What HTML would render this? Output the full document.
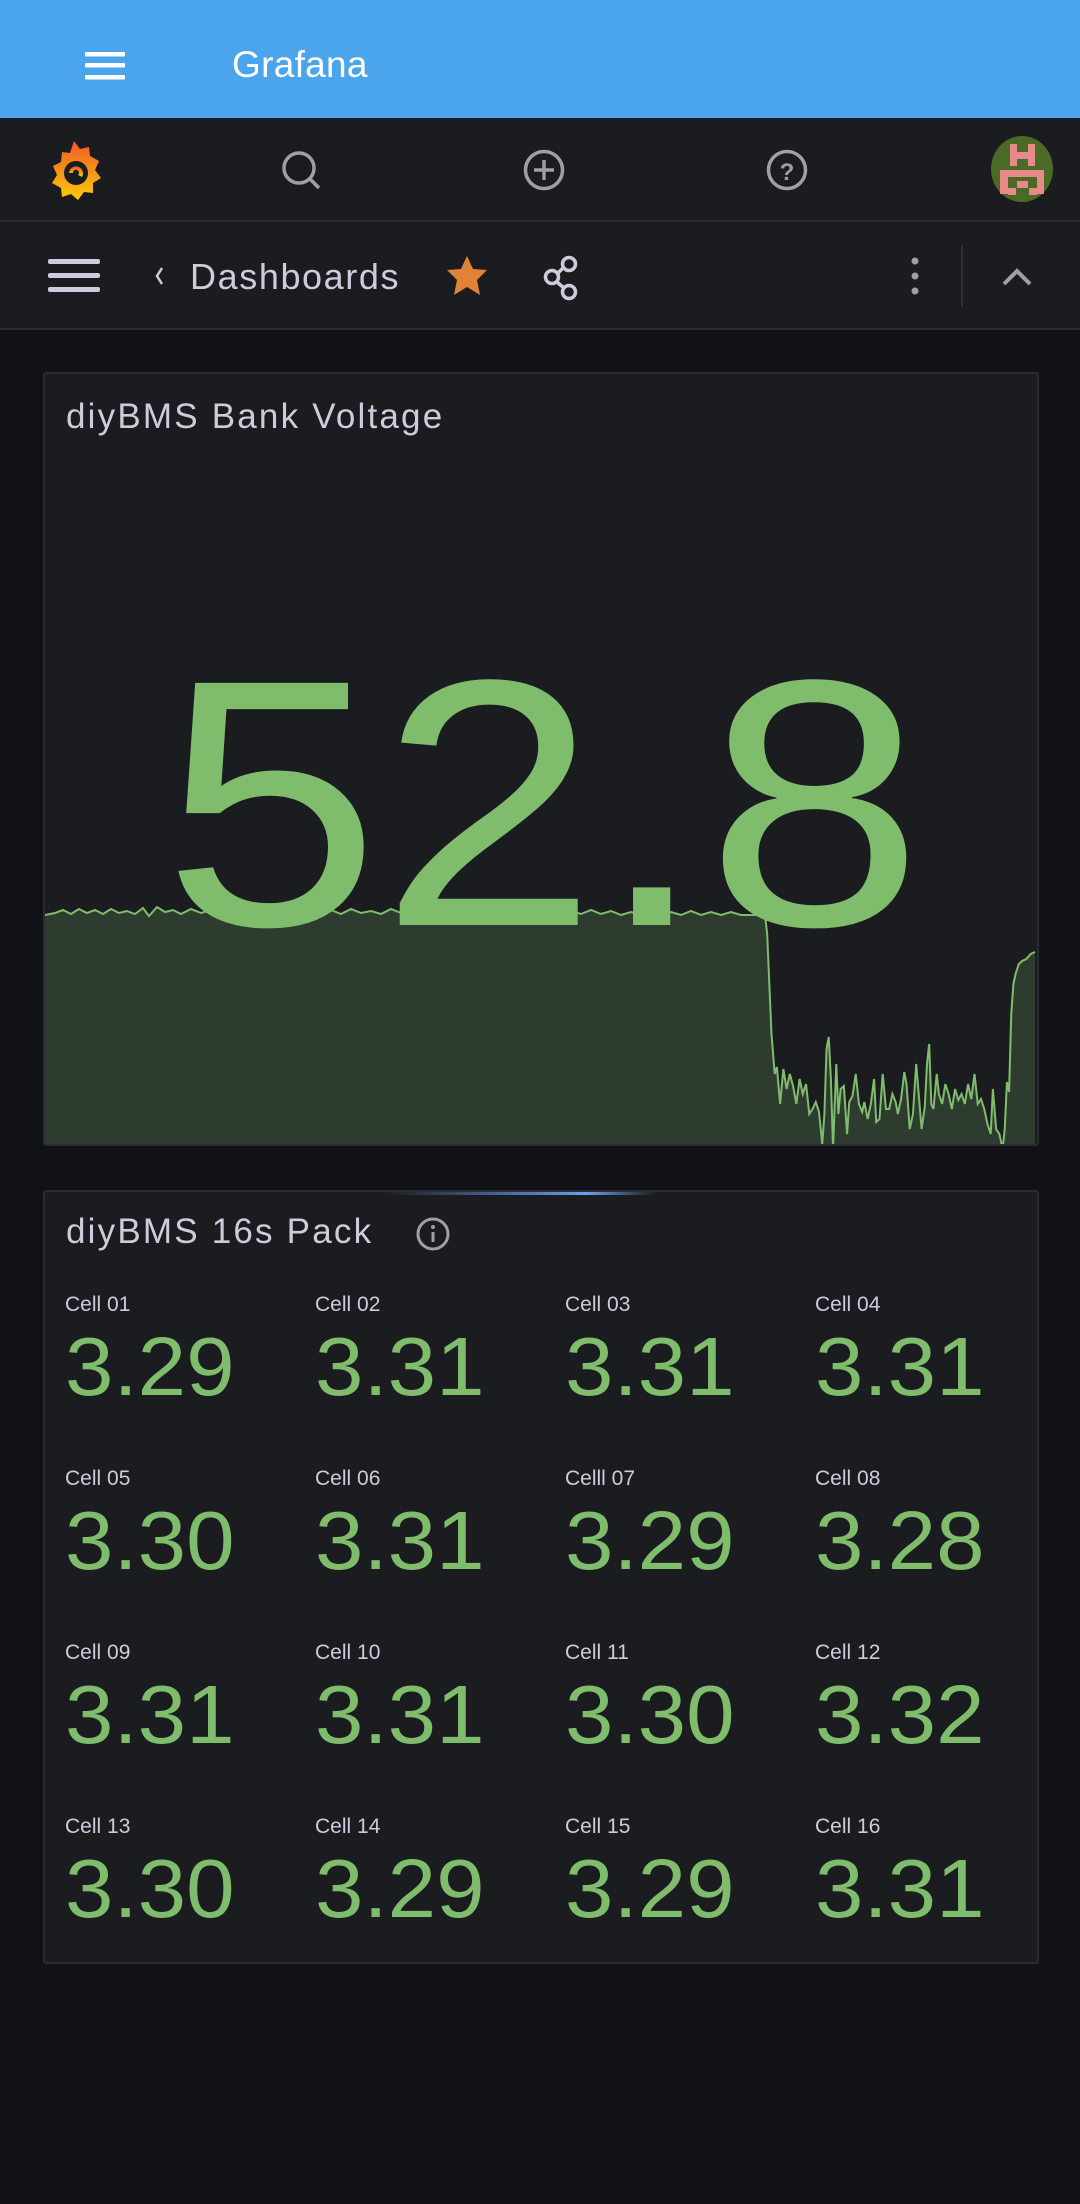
<!DOCTYPE html>
<html><head><meta charset="utf-8"><style>
*{margin:0;padding:0;box-sizing:border-box}
body{width:1080px;height:2204px;background:#111217;font-family:"Liberation Sans",sans-serif;position:relative;overflow:hidden}
.abs{position:absolute}
.hdr{left:0;top:0;width:1080px;height:118px;background:#4aa5ec}
.nav{left:0;top:118px;width:1080px;height:104px;background:#1b1c20;border-bottom:2px solid #2b2c31}
.tb{left:0;top:222px;width:1080px;height:108px;background:#1b1c20;border-bottom:2px solid #2b2c31}
.panel{background:#1b1c20;border:2px solid #2a2c33;border-radius:3px}
.lbl{color:#ccccdc;font-size:21px}
.val{color:#7fbd6d;font-size:83px;line-height:1;transform:scaleX(1.05);transform-origin:0 0}
.ttl{color:#ccccdc;font-size:35px;letter-spacing:2.2px}
</style></head><body>
<div class="abs hdr"></div>
<svg class="abs" style="left:0;top:0" width="1080" height="330">
 <g fill="#fff"><rect x="85" y="52" width="40" height="4.5" rx="1"/><rect x="85" y="63" width="40" height="4.5" rx="1"/><rect x="85" y="75" width="40" height="4.5" rx="1"/></g>
</svg>
<div class="abs" style="left:232px;top:44px;color:#fff;font-size:37px;letter-spacing:0.3px">Grafana</div>
<div class="abs nav"></div>
<div class="abs tb"></div>
<svg class="abs" style="left:0;top:118px" width="1080" height="212">
 <defs><linearGradient id="lg" x1="0" y1="0" x2="0" y2="1"><stop offset="0" stop-color="#f05a28"/><stop offset="1" stop-color="#fbca0a"/></linearGradient></defs>
 <g transform="translate(76,53)">
  <path d="M-2,-30 L4,-22 L13,-24 L14,-15 L23,-10 L19,-1 L25,7 L17,12 L17,22 L8,21 L2,29 L-5,23 L-14,26 L-15,17 L-24,12 L-19,4 L-23,-5 L-15,-9 L-14,-19 L-6,-18 Z" fill="url(#lg)"/>
  <circle cx="0" cy="2" r="12" fill="#1b1c20"/>
  <path d="M-7,2 A7,7 0 1 1 6,6 L2,4 A3,3 0 1 0 -3,2 Z" fill="url(#lg)"/>
 </g>
 <g fill="none" stroke="#9fa0a6" stroke-width="3.5">
  <circle cx="299" cy="50" r="15"/><line x1="310" y1="61" x2="319" y2="70"/>
  <circle cx="544" cy="52" r="18.5"/><line x1="544" y1="42" x2="544" y2="62"/><line x1="534" y1="52" x2="554" y2="52"/>
  <circle cx="787" cy="52" r="18.5"/>
 </g>
 <text x="787" y="62" fill="#9fa0a6" font-size="24" font-weight="bold" text-anchor="middle" font-family="Liberation Sans">?</text>
 <g>
  <ellipse cx="1022" cy="51" rx="31" ry="33" fill="#4a6a25"/>
  <g fill="#e8898a">
   <rect x="1010" y="26" width="7" height="22"/><rect x="1028" y="26" width="7" height="22"/><rect x="1017" y="34" width="11" height="7"/>
   <rect x="1000" y="52" width="8" height="24"/><rect x="1037" y="52" width="7" height="24"/><rect x="1008" y="52" width="29" height="7"/><rect x="1017" y="63" width="11" height="7"/><rect x="1008" y="70" width="8" height="7"/><rect x="1029" y="70" width="8" height="7"/>
  </g>
 </g>
 <g fill="#ccccdc"><rect x="48" y="141" width="52" height="5" rx="2"/><rect x="48" y="155" width="52" height="5" rx="2"/><rect x="48" y="169" width="52" height="5" rx="2"/></g>
 <path d="M162,150 L157,158 L162,166" fill="none" stroke="#ccccdc" stroke-width="2.5"/>
 <path d="M467,138 L473,151 L487,152 L477,162 L480,177 L467,169 L454,177 L457,162 L447,152 L461,151 Z" fill="#e08339"/>
 <g fill="none" stroke="#ccccdc" stroke-width="3.5">
  <circle cx="552" cy="159" r="6.5"/><circle cx="569" cy="146" r="6.5"/><circle cx="569" cy="174" r="6.5"/>
  <line x1="558" y1="155" x2="563" y2="150"/><line x1="557" y1="164" x2="564" y2="170"/>
 </g>
 <g fill="#9fa0a6"><circle cx="915" cy="143" r="3.5"/><circle cx="915" cy="158" r="3.5"/><circle cx="915" cy="173" r="3.5"/></g>
 <line x1="962" y1="127" x2="962" y2="189" stroke="#2f3036" stroke-width="2"/>
 <path d="M1004,166 L1017,153 L1030,166" fill="none" stroke="#9fa0a6" stroke-width="4"/>
</svg>
<div class="abs" style="left:190px;top:256px;color:#ccccdc;font-size:36px;letter-spacing:1.6px">Dashboards</div>

<div class="abs panel" style="left:43px;top:372px;width:996px;height:774px;overflow:hidden">
 <div class="abs ttl" style="left:21px;top:23px">diyBMS Bank Voltage</div>
 <svg class="abs" style="left:0;top:0" width="996" height="774">
  <path d="M0,541 L10,539 L18,536 L26,540 L34,535 L42,539 L50,536 L58,540 L66,535 L74,539 L82,537 L90,540 L98,534 L104,542 L112,533 L120,538 L128,536 L136,540 L146,535 L156,539 L166,536 L176,540 L186,535 L196,538 L206,537 L216,540 L226,535 L236,539 L246,536 L256,540 L266,534 L276,539 L286,536 L296,540 L306,535 L316,539 L326,537 L336,540 L346,535 L356,539 L366,536 L376,540 L386,535 L396,539 L406,537 L416,540 L426,535 L436,539 L446,536 L456,540 L466,534 L476,539 L486,536 L496,540 L506,535 L516,539 L526,537 L536,540 L546,536 L556,540 L566,537 L576,541 L586,538 L596,541 L606,537 L616,541 L626,538 L636,541 L646,537 L656,541 L666,538 L676,541 L686,538 L696,541 L720,541 L720,774 L0,774 Z" fill="#2e3c2f"/>
  <path d="M0,541 L10,539 L18,536 L26,540 L34,535 L42,539 L50,536 L58,540 L66,535 L74,539 L82,537 L90,540 L98,534 L104,542 L112,533 L120,538 L128,536 L136,540 L146,535 L156,539 L166,536 L176,540 L186,535 L196,538 L206,537 L216,540 L226,535 L236,539 L246,536 L256,540 L266,534 L276,539 L286,536 L296,540 L306,535 L316,539 L326,537 L336,540 L346,535 L356,539 L366,536 L376,540 L386,535 L396,539 L406,537 L416,540 L426,535 L436,539 L446,536 L456,540 L466,534 L476,539 L486,536 L496,540 L506,535 L516,539 L526,537 L536,540 L546,536 L556,540 L566,537 L576,541 L586,538 L596,541 L606,537 L616,541 L626,538 L636,541 L646,537 L656,541 L666,538 L676,541 L686,538 L696,541 L720,541" fill="none" stroke="#7fbd6d" stroke-width="2"/>
  <g transform="translate(720,0) scale(1.08,1) translate(-720,0)">
   <path d="M720,541 L722,560 L726,660 L729,700 L731,693 L734,730 L737,695 L740,715 L743,700 L746,712 L749,730 L752,705 L755,720 L758,710 L761,740 L764,735 L767,728 L770,738 L773,770 L775,740 L777,675 L779,663 L781,705 L783,775 L786,690 L788,740 L790,715 L793,712 L796,760 L798,728 L801,722 L804,700 L807,730 L810,738 L812,728 L815,745 L818,730 L821,705 L823,748 L826,745 L829,700 L832,735 L835,735 L838,720 L841,728 L843,740 L846,725 L849,698 L851,710 L854,755 L857,740 L860,690 L862,716 L865,755 L868,732 L870,690 L872,670 L874,730 L876,735 L879,700 L881,720 L884,730 L887,710 L890,720 L893,735 L896,715 L899,726 L902,720 L905,730 L908,710 L911,725 L914,700 L917,730 L920,725 L923,735 L926,750 L929,760 L931,715 L934,755 L937,760 L940,775 L942,755 L944,708 L946,718 L948,640 L950,610 L952,600 L955,590 L958,587 L962,585 L966,580 L970,578 L970,774 L720,774 Z" fill="#2e3c2f"/>
   <path d="M720,541 L722,560 L726,660 L729,700 L731,693 L734,730 L737,695 L740,715 L743,700 L746,712 L749,730 L752,705 L755,720 L758,710 L761,740 L764,735 L767,728 L770,738 L773,770 L775,740 L777,675 L779,663 L781,705 L783,775 L786,690 L788,740 L790,715 L793,712 L796,760 L798,728 L801,722 L804,700 L807,730 L810,738 L812,728 L815,745 L818,730 L821,705 L823,748 L826,745 L829,700 L832,735 L835,735 L838,720 L841,728 L843,740 L846,725 L849,698 L851,710 L854,755 L857,740 L860,690 L862,716 L865,755 L868,732 L870,690 L872,670 L874,730 L876,735 L879,700 L881,720 L884,730 L887,710 L890,720 L893,735 L896,715 L899,726 L902,720 L905,730 L908,710 L911,725 L914,700 L917,730 L920,725 L923,735 L926,750 L929,760 L931,715 L934,755 L937,760 L940,775 L942,755 L944,708 L946,718 L948,640 L950,610 L952,600 L955,590 L958,587 L962,585 L966,580 L970,578" fill="none" stroke="#7fbd6d" stroke-width="2" vector-effect="non-scaling-stroke"/>
  </g>
  <text x="498" y="551" fill="#7fbd6d" font-size="352" text-anchor="middle" font-family="Liberation Sans" transform="translate(498,0) scale(1.11,1) translate(-498,0)">52.8</text>
 </svg>
</div>

<div class="abs panel" style="left:43px;top:1190px;width:996px;height:774px">
 <div class="abs" style="left:340px;top:0;width:270px;height:3px;background:linear-gradient(90deg,rgba(90,140,230,0),#6a9ef0 75%,rgba(90,140,230,0))"></div>
 <div class="abs ttl" style="left:21px;top:20px">diyBMS 16s Pack</div>
 <svg class="abs" style="left:370px;top:24px" width="36" height="36"><circle cx="18" cy="18" r="15" fill="none" stroke="#9fa0a6" stroke-width="3"/><rect x="16.5" y="16" width="3" height="10" fill="#9fa0a6"/><circle cx="18" cy="11" r="2" fill="#9fa0a6"/></svg>
</div>
<div class="abs" style="left:0;top:0;width:1080px">
 <div class="abs lbl" style="left:65px;top:1293px">Cell 01</div><div class="abs val" style="left:65px;top:1325px">3.29</div>
 <div class="abs lbl" style="left:315px;top:1293px">Cell 02</div><div class="abs val" style="left:315px;top:1325px">3.31</div>
 <div class="abs lbl" style="left:565px;top:1293px">Cell 03</div><div class="abs val" style="left:565px;top:1325px">3.31</div>
 <div class="abs lbl" style="left:815px;top:1293px">Cell 04</div><div class="abs val" style="left:815px;top:1325px">3.31</div>
 <div class="abs lbl" style="left:65px;top:1467px">Cell 05</div><div class="abs val" style="left:65px;top:1499px">3.30</div>
 <div class="abs lbl" style="left:315px;top:1467px">Cell 06</div><div class="abs val" style="left:315px;top:1499px">3.31</div>
 <div class="abs lbl" style="left:565px;top:1467px">Celll 07</div><div class="abs val" style="left:565px;top:1499px">3.29</div>
 <div class="abs lbl" style="left:815px;top:1467px">Cell 08</div><div class="abs val" style="left:815px;top:1499px">3.28</div>
 <div class="abs lbl" style="left:65px;top:1641px">Cell 09</div><div class="abs val" style="left:65px;top:1673px">3.31</div>
 <div class="abs lbl" style="left:315px;top:1641px">Cell 10</div><div class="abs val" style="left:315px;top:1673px">3.31</div>
 <div class="abs lbl" style="left:565px;top:1641px">Cell 11</div><div class="abs val" style="left:565px;top:1673px">3.30</div>
 <div class="abs lbl" style="left:815px;top:1641px">Cell 12</div><div class="abs val" style="left:815px;top:1673px">3.32</div>
 <div class="abs lbl" style="left:65px;top:1815px">Cell 13</div><div class="abs val" style="left:65px;top:1847px">3.30</div>
 <div class="abs lbl" style="left:315px;top:1815px">Cell 14</div><div class="abs val" style="left:315px;top:1847px">3.29</div>
 <div class="abs lbl" style="left:565px;top:1815px">Cell 15</div><div class="abs val" style="left:565px;top:1847px">3.29</div>
 <div class="abs lbl" style="left:815px;top:1815px">Cell 16</div><div class="abs val" style="left:815px;top:1847px">3.31</div>
</div>
</body></html>
